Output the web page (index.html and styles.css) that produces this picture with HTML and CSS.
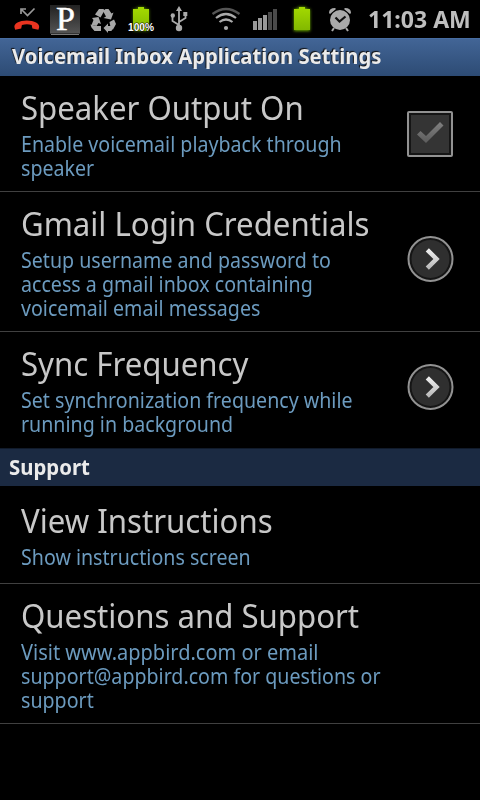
FILE: index.html
```html
<!DOCTYPE html>
<html lang="en">
<head>
<meta charset="utf-8">
<title>Voicemail Inbox Application Settings</title>
<link rel="stylesheet" href="styles.css">
</head>
<body>
<header class="status">
  <svg class="icons" width="360" height="38" viewBox="0 0 360 38">
    <defs>
      <linearGradient id="green" x1="0" y1="0" x2="0" y2="1"><stop offset="0" stop-color="#a4da00"/><stop offset="1" stop-color="#82b800"/></linearGradient>
      <linearGradient id="tile" x1="0" y1="0" x2="0" y2="1"><stop offset="0" stop-color="#222"/><stop offset="1" stop-color="#555"/></linearGradient>
      <filter id="glow" x="-30%" y="-30%" width="160%" height="160%"><feGaussianBlur stdDeviation="1.5"/></filter>
    </defs>
    <!-- missed call -->
    <path d="M22 10l5.500 5.500l7-7M21 14V9h5" fill="none" stroke="#999" stroke-width="1.700"/>
    <path d="M14.500 27.500c-1-4 5-7 12.300-7s13.300 3 12.300 7l-.7 2.200l-6-1.300l-.7-3.400q-4.600-1.300-9.800 0l-.7 3.400l-6 1.300z" fill="#e93420"/>
    <!-- P tile -->
    <rect x="50" y="5" width="30" height="29" fill="url(#tile)"/>
    <path d="M50 33.500h30" stroke="#333"/><path d="M51 34.500h28" stroke="#777"/>
    <text x="65.500" y="30" class="p" text-anchor="middle" textLength="19" lengthAdjust="spacingAndGlyphs">P</text>
    <!-- recycle -->
    <g fill="#a8a8a8">
      <path d="M99 9h4.500l1 1.500l-4 7l-5.500-3z"/>
      <path d="M105.500 9h3l3 4.500l2-1l-2.500 7l-7.500-1.500l2.500-1.500l-3-5.500z"/>
      <path d="M109.500 22l4.500-2.500l2 4.500l-3 5.500h-2z"/>
      <path d="M111.500 31h-3.500v2l-4.500-5l4.500-4.500v2.500h5.500z"/>
      <path d="M92 18l6.500-1l2.500 7l-2.500-1l-2 3l-5-1l2-5z"/>
      <path d="M90.500 24.500l1 3l3 3.500h6.500v-5h-5z"/>
    </g>
    <!-- battery with level -->
    <path d="M133 9h4V7h8v2h4v22h-16z" fill="#70b000" filter="url(#glow)" opacity=".7"/>
    <path d="M133 9h5V7h6v2h5v22h-16z" fill="url(#green)"/>
    <text class="level" x="128" y="31" textLength="26" lengthAdjust="spacingAndGlyphs">100%</text>
    <!-- usb -->
    <g fill="none" stroke="#aaa" stroke-width="1.800"><path d="M179 28V9M179 25l-6.500-4v-5M179 22l6.500-4v-4"/></g>
    <g fill="#aaa"><circle cx="179" cy="28" r="3.200"/><path d="M176 11l3-5l3 5z"/><circle cx="172.800" cy="15.500" r="2.200"/><rect x="183.300" y="12" width="4" height="4"/></g>
    <!-- wifi -->
    <g fill="none" stroke-width="2.200"><path d="M212.500 14q13.500-10 27 0" stroke="#555"/><path d="M216 18q10-8 20 0" stroke="#aaa"/><path d="M219.500 22q6.500-5 13 0" stroke="#aaa"/></g>
    <circle cx="226" cy="28" r="2.100" fill="#aaa"/>
    <!-- signal -->
    <g fill="#999"><path d="M253 21h4v9h-4zM258 18h4v12h-4zM263 15h4v15h-4z"/></g>
    <g fill="#4a4a4a"><path d="M268 12h4v18h-4zM273 9h4v21h-4z"/></g>
    <!-- battery -->
    <path d="M294 9h4V7h8v2h4v22h-16z" fill="#70b000" filter="url(#glow)"/>
    <path d="M294 9h5V7h6v2h5v21h-16z" fill="url(#green)"/>
    <!-- alarm -->
    <g fill="#aaa"><circle cx="340" cy="20" r="10"/><path d="M329 13q0-5 6-5l1 1l-6 5zM351 13q0-5-6-5l-1 1l6 5z"/></g>
    <path d="M334 28l-2 3M346 28l2 3" stroke="#aaa" stroke-width="2"/>
    <path d="M335.500 17.500l4 4l6-5" fill="none" stroke="#111" stroke-width="2.200"/>
  </svg>
  <span class="clock"><span class="t">11:03 AM</span></span>
</header>
<h1 class="bar"><span class="t">Voicemail Inbox Application Settings</span></h1>
<main>
  <section class="row">
    <div class="copy">
      <h2><span class="t">Speaker Output On</span></h2>
      <p><span class="t">Enable voicemail playback through</span><span class="t">speaker</span></p>
    </div>
    <svg class="control" width="48" height="48" viewBox="0 0 48 48">
      <defs><linearGradient id="tick" x1="0" y1="0" x2="0" y2="1"><stop offset="0" stop-color="#808080"/><stop offset="1" stop-color="#5c5c5c"/></linearGradient></defs>
      <rect x="2" y="2" width="44" height="44" rx="1" fill="#151515" stroke="#929292" stroke-width="2"/>
      <rect x="5" y="5" width="38" height="38" fill="#343434"/>
      <path d="M11 24.500l3.500-3.500l5.500 5l14-14l3.500 3.500l-17.500 17.500z" fill="url(#tick)"/>
    </svg>
  </section>
  <section class="row">
    <div class="copy">
      <h2><span class="t">Gmail Login Credentials</span></h2>
      <p><span class="t">Setup username and password to</span><span class="t">access a gmail inbox containing</span><span class="t">voicemail email messages</span></p>
    </div>
    <svg class="control round" width="48" height="48" viewBox="0 0 48 48">
      <defs><linearGradient id="arrow" x1="0" y1="0" x2="0" y2="1"><stop offset="0" stop-color="#efefef"/><stop offset="1" stop-color="#b9b9b9"/></linearGradient></defs>
      <circle cx="24.500" cy="24" r="22" fill="#151515" stroke="#929292" stroke-width="2"/>
      <circle cx="24.500" cy="24" r="19" fill="#2f2f2f"/>
      <path d="M21.300 14.800l9.200 9.200l-9.200 9.200" fill="none" stroke="url(#arrow)" stroke-width="4.500"/>
    </svg>
  </section>
  <section class="row last">
    <div class="copy">
      <h2><span class="t">Sync Frequency</span></h2>
      <p><span class="t">Set synchronization frequency while</span><span class="t">running in background</span></p>
    </div>
    <svg class="control round" width="48" height="48" viewBox="0 0 48 48">
      <circle cx="24.500" cy="24" r="22" fill="#151515" stroke="#929292" stroke-width="2"/>
      <circle cx="24.500" cy="24" r="19" fill="#2f2f2f"/>
      <path d="M21.300 14.800l9.200 9.200l-9.200 9.200" fill="none" stroke="url(#arrow)" stroke-width="4.500"/>
    </svg>
  </section>
  <h3 class="category"><span class="t">Support</span></h3>
  <section class="row short">
    <div class="copy">
      <h2><span class="t">View Instructions</span></h2>
      <p><span class="t">Show instructions screen</span></p>
    </div>
  </section>
  <section class="row">
    <div class="copy">
      <h2><span class="t">Questions and Support</span></h2>
      <p><span class="t wide">Visit www.appbird.com or email</span><span class="t">support@appbird.com for questions or</span><span class="t">support</span></p>
    </div>
  </section>
</main>
</body>
</html>
```
FILE: styles.css
```css
* { box-sizing: border-box; margin: 0; padding: 0; }
body { width: 480px; height: 800px; overflow: hidden; background: #000; font-family: "Noto Sans", sans-serif; }
.t { display: block; width: max-content; white-space: nowrap; transform-origin: left center; }
.status { height: 38px; display: flex; }
.icons { flex: none; }
.p { font: 33px "Liberation Serif", serif; fill: #fff; stroke: #fff; stroke-width: .4; }
.level { font: bold 11px "Liberation Sans", sans-serif; fill: #fff; stroke: #000; stroke-width: 1; paint-order: stroke; }
.clock { padding-left: 8px; font-size: 24px; font-weight: 700; line-height: 38px; color: #bebebe; }
.clock .t { transform: scaleX(.96); }
.bar { height: 38px; padding-left: 12px; background: linear-gradient(#426596, #2d4b74); border-top: 1px solid #476da2; font-size: 21px; font-weight: 700; line-height: 35px; color: #ebebeb; text-shadow: -1px -1px 1px #111; }
.bar .t { transform: scaleX(.964); }
.row { display: flex; justify-content: space-between; align-items: center; padding: 11px 26px 12px 21px; border-bottom: 1px solid #404040; }
.row.last { border: 0; padding-bottom: 13px; }
.row.short { padding: 14px 26px 15px 21px; }
h2 { height: 44px; font-size: 33px; font-weight: 400; line-height: 41px; color: #c8c8c8; }
p { font-size: 22px; line-height: 24px; color: #6c9bbf; }
h2 .t { transform: scaleX(.944); }
p .t { transform: scaleX(.892); }
p .wide { transform: scaleX(.909); }
.control { flex: none; margin-top: 2px; }
.round { margin: 0 0 4px; }
.category { height: 38px; padding-left: 9px; background: #1b2a42; border-top: 1px solid #111b2b; font-size: 21px; font-weight: 700; line-height: 36px; color: #ebebeb; }
.category .t { transform: scaleX(.97); }
```
